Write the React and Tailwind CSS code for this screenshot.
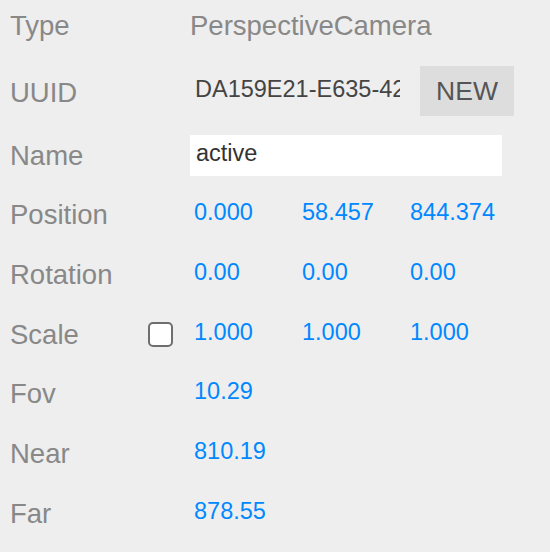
import React from 'react';

const font = { fontFamily: '"Liberation Sans", Arial, sans-serif' };

const Label = ({ children, className = '' }) => (
  <span className={`text-[27.5px] leading-[31px] text-[#888] shrink-0 ${className}`}>{children}</span>
);

const NumberField = ({ value }) => (
  <div className="w-[108px] pl-[4px] text-[23.5px] leading-[27px] text-[#08f] whitespace-nowrap">
    {value}
  </div>
);

const Row = ({ h, children }) => (
  <div className={`flex items-start ${h}`}>{children}</div>
);

export default function App() {
  return (
    <div className="w-[550px] h-[552px] bg-[#eeeeee] pl-[10px] pt-[10px] overflow-hidden" style={font}>
      <Row h="h-[67px]">
        <Label className="w-[180px]">Type</Label>
        <span className="text-[27.5px] leading-[31px] text-[#888]">PerspectiveCamera</span>
      </Row>

      <Row h="h-[63px]">
        <Label className="w-[180px]">UUID</Label>
        <div className="w-[210px] pl-[5px] mt-[-1px] overflow-hidden whitespace-nowrap text-[23.5px] leading-[27px] text-[#444]">
          DA159E21-E635-42
        </div>
        <button className="ml-[20px] -mt-[11px] w-[94px] h-[50px] bg-[#dddddd] text-[#555] text-[26.5px] leading-[30px] uppercase">
          New
        </button>
      </Row>

      <Row h="h-[59px]">
        <Label className="w-[180px]">Name</Label>
        <div className="-mt-[5px] w-[312px] h-[41px] bg-white pl-[6px] pt-[5px] text-[23.5px] leading-[27px] text-[#333]">
          active
        </div>
      </Row>

      <Row h="h-[60px]">
        <Label className="w-[180px]">Position</Label>
        <NumberField value="0.000" />
        <NumberField value="58.457" />
        <NumberField value="844.374" />
      </Row>

      <Row h="h-[60px]">
        <Label className="w-[180px]">Rotation</Label>
        <NumberField value="0.00" />
        <NumberField value="0.00" />
        <NumberField value="0.00" />
      </Row>

      <Row h="h-[59px]">
        <Label className="w-[138px]">Scale</Label>
        <div className="mt-[3px] w-[25px] h-[25px] rounded-[5px] border-2 border-[#6e6e6e] bg-white shrink-0" />
        <div className="w-[17px] shrink-0" />
        <NumberField value="1.000" />
        <NumberField value="1.000" />
        <NumberField value="1.000" />
      </Row>

      <Row h="h-[60px]">
        <Label className="w-[180px]">Fov</Label>
        <NumberField value="10.29" />
      </Row>

      <Row h="h-[60px]">
        <Label className="w-[180px]">Near</Label>
        <NumberField value="810.19" />
      </Row>

      <Row h="h-[54px]">
        <Label className="w-[180px]">Far</Label>
        <NumberField value="878.55" />
      </Row>
    </div>
  );
}
